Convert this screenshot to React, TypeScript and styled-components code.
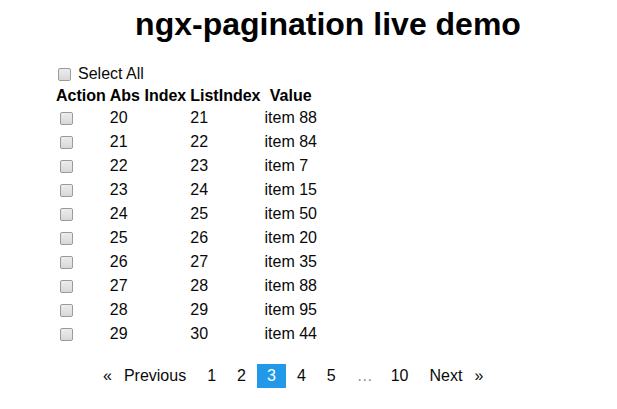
import React from "react";
import styled, { createGlobalStyle } from "styled-components";

const Global = createGlobalStyle`
  html, body { margin: 0; padding: 0; background: #fff; }
  body { font-family: "Liberation Sans", Arial, sans-serif; font-size: 16px; color: #0a0a0a; }
`;

const Page = styled.div`
  display: flex;
  flex-direction: column;
`;

const Title = styled.h1`
  margin: 0;
  padding: 6px 0 0 39px;
  text-align: center;
  font-size: 32px;
  font-weight: bold;
  line-height: 36px;
  color: #000;
`;

const Content = styled.div`
  display: flex;
  flex-direction: column;
  align-items: flex-start;
  padding: 22px 0 0 53px;
`;

const Check = styled.input.attrs({ type: "checkbox" })`
  appearance: none;
  -webkit-appearance: none;
  display: block;
  box-sizing: border-box;
  width: 13px;
  height: 13px;
  margin: 3px 3px 3px 4px;
  border: 1px solid #9a9a9a;
  border-radius: 2px;
  background: linear-gradient(#ececec, #d8d8d8);
`;

const SelectAllRow = styled.label`
  display: flex;
  align-items: center;
  line-height: 20px;
  padding-left: 1px;
  margin-bottom: 1px;
  gap: 4px;
`;

const Table = styled.table`
  border-spacing: 2px;
  border-collapse: separate;
`;

const Th = styled.th`
  padding: 1px;
  font-weight: bold;
  line-height: 16px;
  text-align: center;
  color: #000;
`;

const Td = styled.td`
  padding: 1px;
  line-height: 20px;
  text-align: left;
  vertical-align: middle;
`;

const Pager = styled.ul`
  list-style: none;
  display: flex;
  margin: 17px 0 0 0;
  padding: 0 0 0 93px;
`;

const PageItem = styled.li<{ $current?: boolean; $muted?: boolean }>`
  display: block;
  margin-right: 1px;
  padding: ${(p) => (p.$muted ? "3px 7px 3px 10px" : "3px 10px")};
  line-height: 18px;
  background: ${(p) => (p.$current ? "#2199e8" : "transparent")};
  color: ${(p) => (p.$current ? "#fefefe" : p.$muted ? "#8a8a8a" : "#0a0a0a")};
`;

const Arrow = styled.span<{ $side: "left" | "right" }>`
  ${(p) => (p.$side === "left" ? "margin-right: 12px;" : "margin-left: 12px;")}
`;

const rows = [
  [20, 21, 88],
  [21, 22, 84],
  [22, 23, 7],
  [23, 24, 15],
  [24, 25, 50],
  [25, 26, 20],
  [26, 27, 35],
  [27, 28, 88],
  [28, 29, 95],
  [29, 30, 44],
];

export default function App() {
  return (
    <Page>
      <Global />
      <Title>ngx-pagination live demo</Title>
      <Content>
        <SelectAllRow>
          <Check />
          <span>Select All</span>
        </SelectAllRow>
        <Table>
          <thead>
            <tr>
              <Th>Action</Th>
              <Th>Abs Index</Th>
              <Th>ListIndex</Th>
              <Th>Value</Th>
            </tr>
          </thead>
          <tbody>
            {rows.map(([a, l, v]) => (
              <tr key={a}>
                <Td>
                  <Check />
                </Td>
                <Td>{a}</Td>
                <Td>{l}</Td>
                <Td>item {v}</Td>
              </tr>
            ))}
          </tbody>
        </Table>
      </Content>
      <Pager>
        <PageItem>
          <Arrow $side="left">«</Arrow>Previous
        </PageItem>
        <PageItem>1</PageItem>
        <PageItem>2</PageItem>
        <PageItem $current>3</PageItem>
        <PageItem>4</PageItem>
        <PageItem>5</PageItem>
        <PageItem $muted>…</PageItem>
        <PageItem>10</PageItem>
        <PageItem>
          Next<Arrow $side="right">»</Arrow>
        </PageItem>
      </Pager>
    </Page>
  );
}
